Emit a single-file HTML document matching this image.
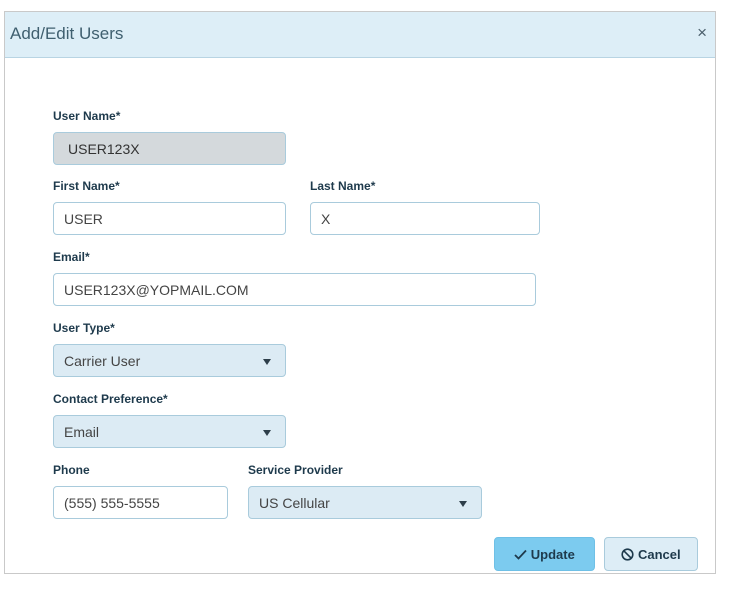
<!DOCTYPE html>
<html><head><meta charset="utf-8"><style>
*{box-sizing:border-box;margin:0;padding:0}
body{width:730px;height:597px;background:#fff;font-family:"Liberation Sans",sans-serif;position:relative;overflow:hidden}
.dlg{position:absolute;left:4px;top:11px;width:712px;height:563px;border:1px solid #c9c9c9;background:#fff}
.hdr{position:absolute;left:0;top:0;width:710px;height:46px;background:#ddeef7;border-bottom:1px solid #b8d4e3}
.ttl{position:absolute;left:5px;top:12px;font-size:17px;color:#3f5f6f}
.x{position:absolute;right:8px;top:11px;font-size:17px;color:#4a5e6b}
.lbl{position:absolute;font-size:12px;font-weight:bold;color:#1e3a4c}
.in{position:absolute;height:33px;border:1px solid #a9cbdc;border-radius:4px;background:#fff;font-size:14px;color:#444;padding:8px 0 0 10px}
.ro{background:#d4d9dc;color:#333;padding-left:14px}
.sel{background:#dcebf4}
.arr{position:absolute;right:14px;top:14px;width:0;height:0;border-left:4px solid transparent;border-right:4px solid transparent;border-top:6px solid #2d3e4a}
.btn{position:absolute;height:34px;border-radius:4px;font-size:13px;font-weight:bold;color:#1e3a4c;padding-top:9px;text-align:center}
</style></head><body>
<div class="dlg">
 <div class="hdr"><div class="ttl">Add/Edit Users</div><div class="x">×</div></div>
</div>
<div class="lbl" style="left:53px;top:109px">User Name*</div>
<div class="in ro" style="left:53px;top:132px;width:233px">USER123X</div>
<div class="lbl" style="left:53px;top:179px">First Name*</div>
<div class="in" style="left:53px;top:202px;width:233px">USER</div>
<div class="lbl" style="left:310px;top:179px">Last Name*</div>
<div class="in" style="left:310px;top:202px;width:230px">X</div>
<div class="lbl" style="left:53px;top:250px">Email*</div>
<div class="in" style="left:53px;top:273px;width:483px">USER123X@YOPMAIL.COM</div>
<div class="lbl" style="left:53px;top:321px">User Type*</div>
<div class="in sel" style="left:53px;top:344px;width:233px">Carrier User<span class="arr"></span></div>
<div class="lbl" style="left:53px;top:392px">Contact Preference*</div>
<div class="in sel" style="left:53px;top:415px;width:233px">Email<span class="arr"></span></div>
<div class="lbl" style="left:53px;top:463px">Phone</div>
<div class="in" style="left:53px;top:486px;width:175px">(555) 555-5555</div>
<div class="lbl" style="left:248px;top:463px">Service Provider</div>
<div class="in sel" style="left:248px;top:486px;width:234px">US Cellular<span class="arr"></span></div>
<div class="btn" style="left:494px;top:537px;width:101px;background:#7ccbef;border:1px solid #6fc0e6">
<svg width="13" height="11" viewBox="0 0 13 11" style="vertical-align:-1px"><path d="M1 6 L4.5 9.5 L12 1.5" fill="none" stroke="#1e3a4c" stroke-width="1.8"/></svg> Update</div>
<div class="btn" style="left:604px;top:537px;width:94px;background:#ddedf6;border:1px solid #a9cbdc">
<svg width="13" height="13" viewBox="0 0 13 13" style="vertical-align:-2px"><circle cx="6.5" cy="6.5" r="5.3" fill="none" stroke="#1e3a4c" stroke-width="1.6"/><path d="M2.8 2.8 L10.2 10.2" stroke="#1e3a4c" stroke-width="1.6"/></svg> Cancel</div>
</body></html>
